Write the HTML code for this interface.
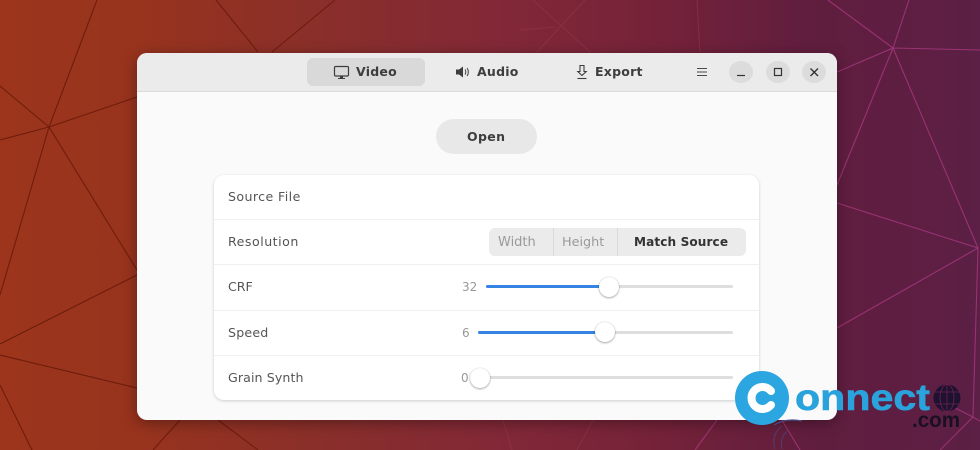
<!DOCTYPE html>
<html><head><meta charset="utf-8"><title>Video</title>
<style>
*{box-sizing:border-box}
html,body{margin:0;padding:0;width:980px;height:450px;overflow:hidden}
body{position:relative;font-family:"DejaVu Sans","Liberation Sans",sans-serif;background:linear-gradient(90deg,#9c351b 0%,#97331e 15%,#8a2f2a 32%,#812838 52%,#742239 68%,#611e3e 82%,#5c1f45 100%)}
.a{position:absolute}
#bg{position:absolute;left:0;top:0}
.win{position:absolute;left:137px;top:53px;width:700px;height:367px;border-radius:10px;background:#fafafa;box-shadow:0 3px 14px rgba(0,0,0,.35);overflow:hidden}
.bar{position:absolute;left:0;top:0;width:700px;height:39px;background:#ebebeb;border-bottom:1px solid #dadada}
.t{position:absolute;white-space:nowrap;line-height:16px}
.tab{font-weight:bold;font-size:12.5px;color:#3d3d3d;letter-spacing:.25px;top:64px}
.lab{font-size:12.6px;color:#555;left:228px}
.val{font-size:12px;color:#999}
.trk{position:absolute;height:3px;background:#dedede;border-radius:2px}
.fill{position:absolute;height:3px;background:#3584e4;border-radius:2px}
.th{position:absolute;width:20px;height:20px;border-radius:50%;background:#fff;box-shadow:0 1px 2px rgba(0,0,0,.32),0 0 1px rgba(0,0,0,.25)}
.div{position:absolute;left:214px;width:545px;height:1px;background:#f0f0f0}
.wb{position:absolute;width:24px;height:22px;top:61px;border-radius:50%;background:#dcdcdc}
</style></head><body>
<svg id="bg" width="980" height="450" fill="none">
<g stroke="#6e1d0c" stroke-width="1.1">
<path d="M49 127L97 0M49 127L0 86M49 127L0 140M49 127L0 295M49 127L137 270M137 97L49 127M137 275L0 344M0 355L137 388M0 385L32 450M180 420L153 450M218 420L258 450M216 0L258 52M335 0L272 52"/>
</g>
<g stroke="#9a3a4e" stroke-width="1" opacity=".5">
<path d="M533 0L590 52M585 0L537 52M520 30L555 27M697 0L700 52M503 420L512 450M593 420L577 450"/>
</g>
<g stroke="#a5367c" stroke-width="1.100" opacity=".85">
<path d="M893 48L828 0M893 48L909 0M893 48L980 50M893 48L837 72M893 48L837 185M893 48L978 248M837 203L978 248M978 248L837 328M978 248L973 417M973 417L980 421M973 417L940 450M973 417L955 408M695 450L717 420M780 417L800 450"/>
</g>
</svg>

<div class="win"><div class="bar"></div></div>

<div class="a" style="left:307px;top:58px;width:118px;height:28px;border-radius:6px;background:#d9d9d9"></div>
<svg class="a" style="left:333px;top:65px" width="18" height="15" fill="none"><rect x="1.500" y="1.500" width="14" height="9.500" rx="1.200" stroke="#3d3d3d" stroke-width="1.200"/><path d="M5 13h7v1H5zM7 11h3v2H7z" fill="#3d3d3d"/></svg>
<div class="t tab" style="left:356px">Video</div>
<svg class="a" style="left:455px;top:65px" width="17" height="14" fill="none"><path d="M1 4.500h3L8 1.500v11L4 9.500H1z" fill="#3d3d3d"/><path d="M10 4.500c1 1.500 1 3.500 0 5M12 3c1.800 2.400 1.800 5.600 0 8" stroke="#3d3d3d" stroke-width="1"/></svg>
<div class="t tab" style="left:477px">Audio</div>
<svg class="a" style="left:575px;top:64px" width="14" height="16" fill="none" stroke="#3d3d3d" stroke-width="1.100"><path d="M5 1.500h4v6h2.200L7 11.500 2.800 7.500H5z"/><path d="M2.500 14.500h9"/></svg>
<div class="t tab" style="left:595px">Export</div>

<svg class="a" style="left:696px;top:67px" width="12" height="10" stroke="#4a4a4a" stroke-width="1"><path d="M1 1.500h10M1 5h10M1 8.500h10"/></svg>
<div class="wb" style="left:729px"></div>
<div class="wb" style="left:766px"></div>
<div class="wb" style="left:802px"></div>
<svg class="a" style="left:729px;top:61px" width="100" height="22" fill="none" stroke="#333" stroke-width="1.200"><path d="M8 14.500h8"/><rect x="45.500" y="7.500" width="7" height="7"/><path d="M81.500 7.500l7.500 7.500M89 7.500l-7.500 7.500" stroke-width="1.400"/></svg>

<div class="a" style="left:436px;top:119px;width:101px;height:35px;border-radius:18px;background:#e8e8e8"></div>
<div class="t tab" style="left:467px;top:129px;letter-spacing:.35px">Open</div>

<div class="a" style="left:214px;top:175px;width:545px;height:225px;border-radius:10px;background:#fff;box-shadow:0 1px 3px rgba(0,0,0,.18)"></div>
<div class="div" style="top:219px"></div>
<div class="div" style="top:264px"></div>
<div class="div" style="top:310px"></div>
<div class="div" style="top:355px"></div>

<div class="t lab" style="top:189px;letter-spacing:.4px">Source File</div>
<div class="t lab" style="top:234px;letter-spacing:.5px">Resolution</div>
<div class="t lab" style="top:279px">CRF</div>
<div class="t lab" style="top:325px;letter-spacing:.2px">Speed</div>
<div class="t lab" style="top:370px;letter-spacing:.1px">Grain Synth</div>

<div class="a" style="left:489px;top:228px;width:257px;height:28px;border-radius:6px;background:#ebebeb"></div>
<div class="a" style="left:553px;top:228px;width:1px;height:28px;background:#dadada"></div>
<div class="a" style="left:617px;top:228px;width:1px;height:28px;background:#dadada"></div>
<div class="t" style="left:498px;top:235px;font-size:13px;color:#9a9a9a">Width</div>
<div class="t" style="left:562px;top:235px;font-size:12.8px;color:#9a9a9a">Height</div>
<div class="t" style="left:634px;top:234px;font-size:12.1px;font-weight:bold;color:#333;letter-spacing:.1px">Match Source</div>

<div class="t val" style="left:462px;top:279px">32</div>
<div class="trk" style="left:486px;top:285px;width:247px"></div>
<div class="fill" style="left:486px;top:285px;width:123px"></div>
<div class="th" style="left:599px;top:277px"></div>

<div class="t val" style="left:462px;top:325px">6</div>
<div class="trk" style="left:478px;top:331px;width:255px"></div>
<div class="fill" style="left:478px;top:331px;width:127px"></div>
<div class="th" style="left:595px;top:322px"></div>

<div class="t val" style="left:461px;top:370px">0</div>
<div class="trk" style="left:480px;top:376px;width:253px"></div>
<div class="th" style="left:470px;top:368px"></div>

<svg class="a" style="left:730px;top:365px" width="250" height="85" fill="none">
<path d="M44 60c8-5 18-6 28-4" stroke="#4a4a86" stroke-width="1.200"/>
<path d="M45 84c-3-9 0-18 7-23M52 84c-2-7 0-13 5-18" stroke="#4a4a86" stroke-width="1" opacity=".7"/>
<circle cx="32" cy="33" r="27" fill="#2ba6e0"/>
<path d="M41 26A11 11 0 1 0 41 40" stroke="#fff" stroke-width="8" stroke-linecap="round"/>
<text x="65" y="45" font-family="Liberation Sans,sans-serif" font-weight="bold" font-size="37" fill="#2aa3dc" stroke="#2aa3dc" stroke-width=".6" textLength="135" lengthAdjust="spacingAndGlyphs">onnect</text>
<circle cx="217" cy="33" r="13.500" fill="#1e1230"/>
<g stroke="#6b2350" stroke-width=".8"><ellipse cx="217" cy="33" rx="7" ry="13.500"/><path d="M217 19.500v27M204 27h26M204 39h26"/></g>
<text x="182" y="62" font-family="Liberation Sans,sans-serif" font-weight="bold" font-size="21" fill="#1a1024" textLength="48" lengthAdjust="spacingAndGlyphs">.com</text>
</svg>
</body></html>
